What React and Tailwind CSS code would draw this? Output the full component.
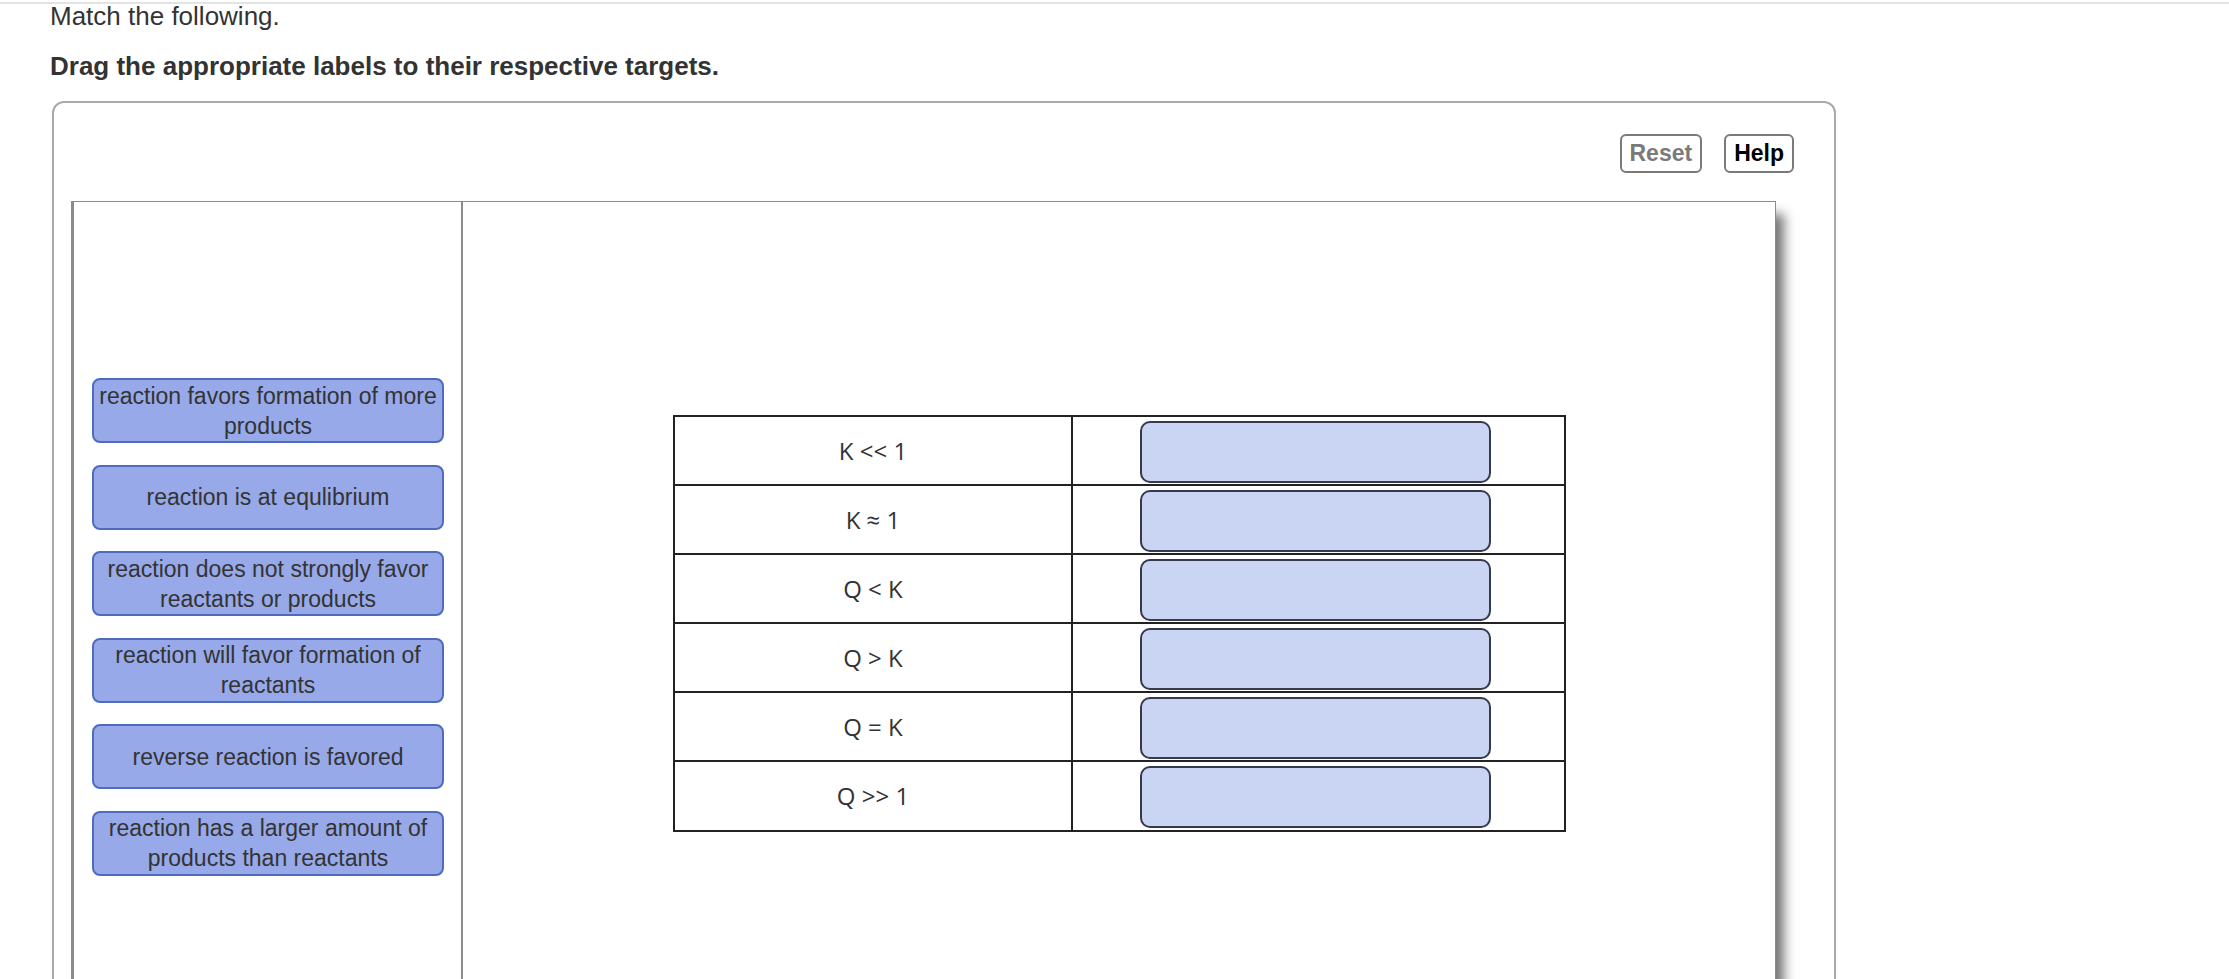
import React from "react";

const labels = [
  "reaction favors formation of more products",
  "reaction is at equlibrium",
  "reaction does not strongly favor reactants or products",
  "reaction will favor formation of reactants",
  "reverse reaction is favored",
  "reaction has a larger amount of products than reactants",
];

const rows = ["K << 1", "K \u2248 1", "Q < K", "Q > K", "Q = K", "Q >> 1"];

export default function App() {
  return (
    <div
      className="w-[2229px] h-[979px] overflow-hidden bg-white text-[#333]"
      style={{ fontFamily: '"Liberation Sans", Arial, sans-serif' }}
    >
      <div className="h-[2px] mt-[2px] bg-[#e3e3e3]" />
      <div className="pl-[50px]">
        <div className="text-[26px] leading-[26px] -mt-[1px]">Match the following.</div>
        <div className="text-[26px] leading-[26px] font-bold mt-[24px]">
          Drag the appropriate labels to their respective targets.
        </div>
        <div className="ml-[2px] mt-[22px] w-[1784px] h-[900px] border-2 border-[#a9a9a9] rounded-[12px]">
          <div className="flex justify-end gap-[22px] pt-[31px] pr-[40px]">
            <button className="h-[39px] px-[8px] border-2 border-[#7a7a7a] rounded-[6px] text-[23px] font-bold text-[#7a7a7a] leading-none">
              Reset
            </button>
            <button className="h-[39px] px-[8px] border-2 border-[#7a7a7a] rounded-[6px] text-[23px] font-bold text-black leading-none">
              Help
            </button>
          </div>
          <div className="ml-[17px] mt-[28px] w-[1705px] h-[820px] flex bg-white border-l-[3px] border-t-[1.5px] border-r border-[#8c8c8c] shadow-[11px_10px_11px_-3px_rgba(0,0,0,0.55)]">
            <div className="w-[389px] border-r-2 border-[#8c8c8c] pt-[176px] pl-[18px]">
              {labels.map((l) => (
                <div
                  key={l}
                  className="w-[352px] h-[65px] mb-[21.5px] flex items-center justify-center text-center px-[1px] bg-[#97a9e8] border-2 border-[#4f6bbd] rounded-[8px] text-[23px] leading-[30px] text-[#333]"
                >
                  {l}
                </div>
              ))}
            </div>
            <div className="flex-1 pt-[213px] pl-[210px]">
              <div className="w-[893px] border-2 border-[#222]">
                {rows.map((r, i) => (
                  <div
                    key={r}
                    className={
                      i < rows.length - 1
                        ? "flex h-[69px] border-b-2 border-[#222]"
                        : "flex h-[68px]"
                    }
                  >
                    <div
                      className="w-[398px] border-r-2 border-[#222] flex items-center justify-center text-[24px] text-[#333]"
                      style={{ fontFamily: '"Open Sans", "DejaVu Sans", sans-serif' }}
                    >
                      {r}
                    </div>
                    <div className="flex-1 pl-[67px] pt-[4px]">
                      <div className="w-[351px] h-[62px] bg-[#cad5f4] border-2 border-[#343a4c] rounded-[10px]" />
                    </div>
                  </div>
                ))}
              </div>
            </div>
          </div>
        </div>
      </div>
    </div>
  );
}
